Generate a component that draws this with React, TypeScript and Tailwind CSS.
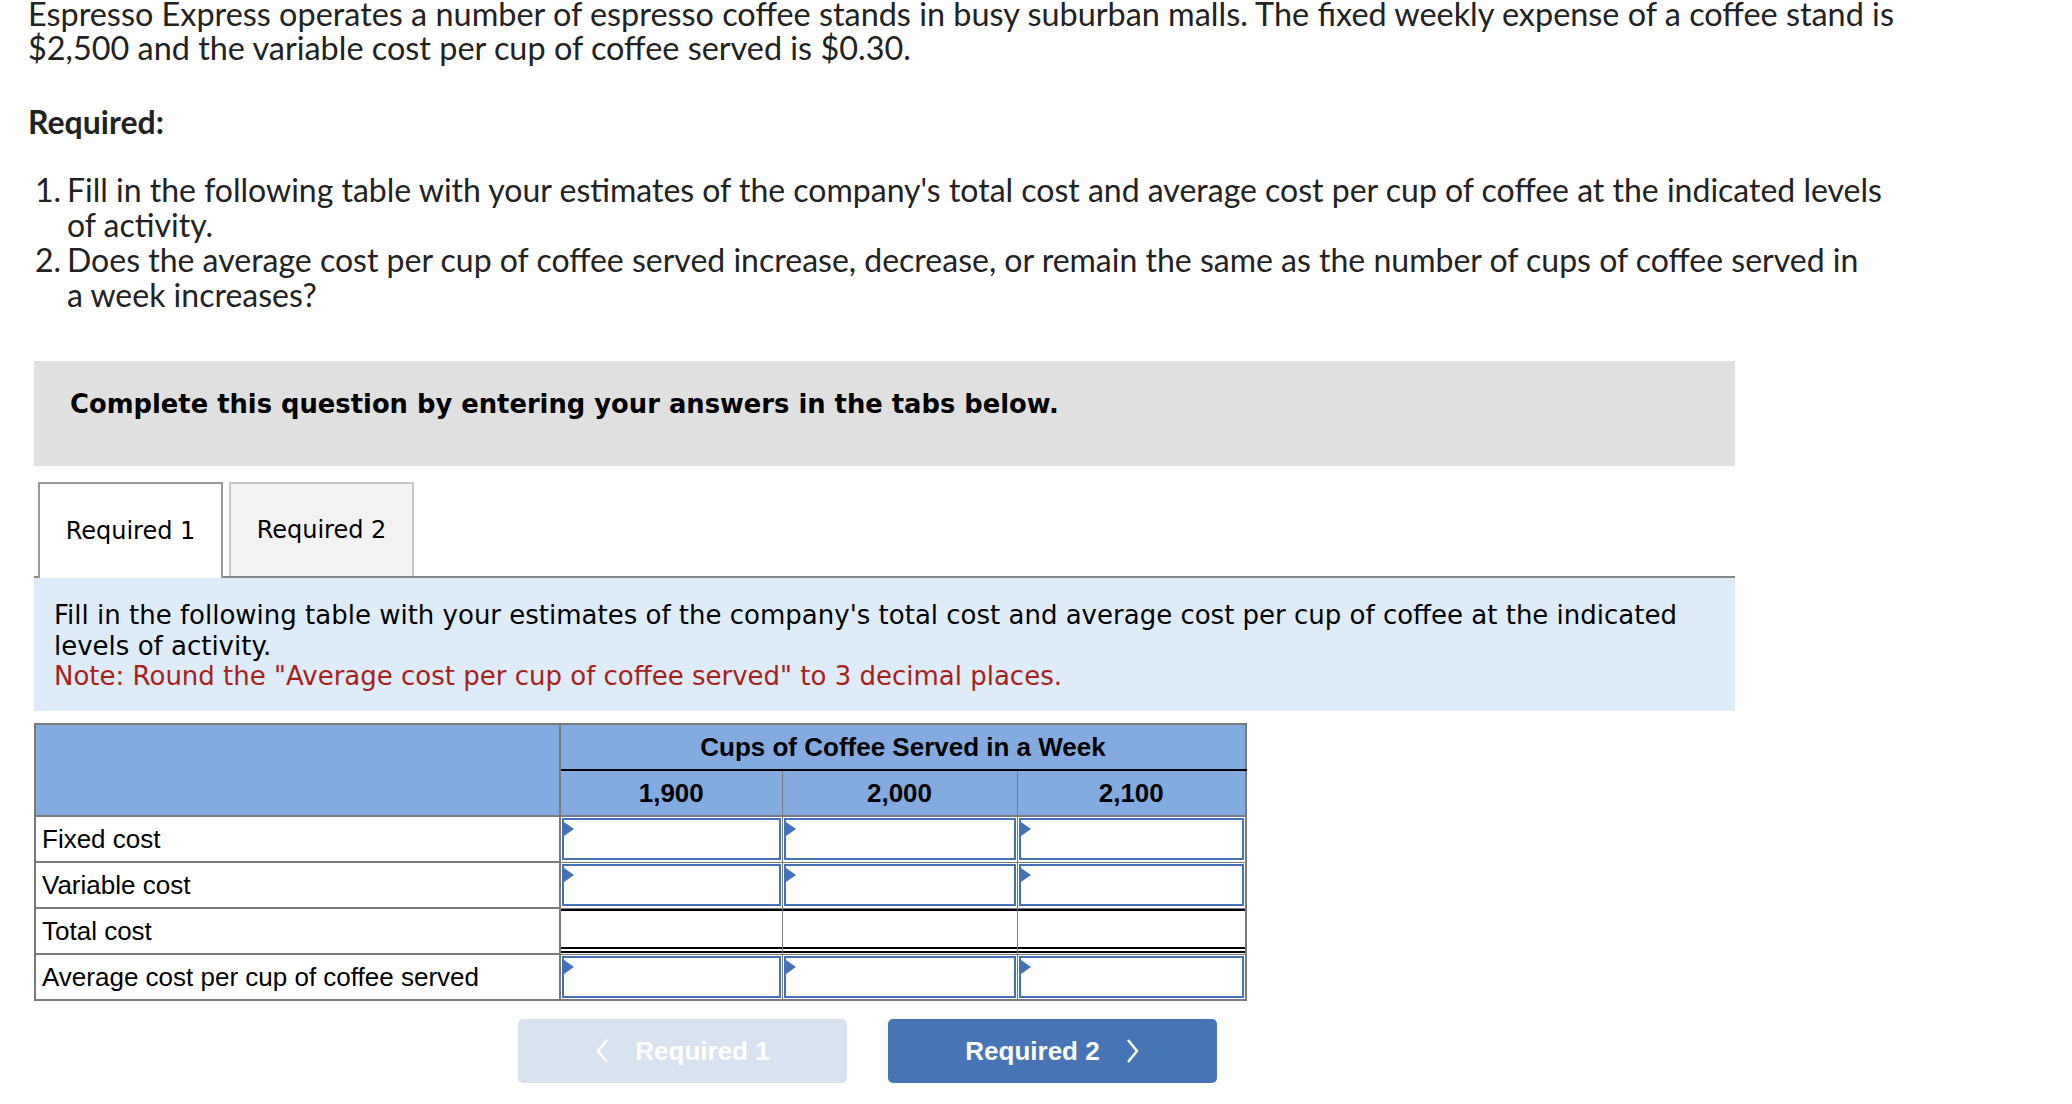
import React from "react";

const intro = "font-['Lato','Liberation_Sans',sans-serif] text-[#222222]";
const verdana = "font-['DejaVu_Sans','Verdana',sans-serif]";
const arial = "font-['Liberation_Sans','Arial',sans-serif]";

const cols = ["1,900", "2,000", "2,100"];

const InputCell: React.FC = () => (
  <td className="border border-[#7b7b7b] p-[1px] bg-white">
    <div className="relative h-[42px] border-2 border-[#4472b8] bg-white">
      <span className="absolute left-0 top-[2px] w-0 h-0 border-y-[7px] border-y-transparent border-l-[10px] border-l-[#4472b8]" />
    </div>
  </td>
);

const TotalCell: React.FC = () => (
  <td className="border border-[#7b7b7b] p-0 bg-white">
    <div className="h-[44px] border-t-2 border-t-black border-b-[6px] border-b-black border-double" />
  </td>
);

const rows = [
  { label: "Fixed cost", total: false },
  { label: "Variable cost", total: false },
  { label: "Total cost", total: true },
  { label: "Average cost per cup of coffee served", total: false },
];

const App: React.FC = () => {
  return (
    <div className="min-h-screen bg-white px-[28px] pb-10">
      {/* problem statement */}
      <p className={`${intro} text-[32.4px] leading-[34px] -mt-[3px] whitespace-nowrap`}>
        Espresso Express operates a number of espresso coffee stands in busy suburban malls. The fixed weekly expense of a coffee stand is
        <br />
        $2,500 and the variable cost per cup of coffee served is $0.30.
      </p>

      <p className={`${intro} text-[32px] leading-[34px] font-bold mt-[40px]`}>Required:</p>

      <div className={`${intro} text-[32px] leading-[35px] mt-[33px] whitespace-nowrap`}>
        <div className="flex">
          <span className="w-[33px] text-right shrink-0">1.</span>
          <span className="pl-[6px]">
            Fill in the following table with your estimates of the company's total cost and average cost per cup of coffee at the indicated levels
            <br />
            of activity.
          </span>
        </div>
        <div className="flex">
          <span className="w-[33px] text-right shrink-0">2.</span>
          <span className="pl-[6px]">
            Does the average cost per cup of coffee served increase, decrease, or remain the same as the number of cups of coffee served in
            <br />
            a week increases?
          </span>
        </div>
      </div>

      <div className="ml-[6px] w-[1701px]">
        {/* instructions banner */}
        <div className="mt-[49px] h-[105px] bg-[#e0e0e0] px-[36px] pt-[28px]">
          <p className={`${verdana} font-bold text-[25.8px] leading-[30px] text-black`}>
            Complete this question by entering your answers in the tabs below.
          </p>
        </div>

        {/* tabs */}
        <div className="mt-[16px] flex items-end border-b-2 border-[#8a8a8a] pl-[4px] gap-[6px]">
          <div className={`${verdana} relative -mb-[2px] flex h-[96px] w-[185px] items-center justify-center border-2 border-b-0 border-[#999999] bg-white text-[24px] text-black`}>
            Required 1
          </div>
          <div className={`${verdana} flex h-[94px] w-[185px] items-center justify-center border-2 border-b-0 border-[#c8c8c8] bg-[#f2f2f2] text-[24px] text-black`}>
            Required 2
          </div>
        </div>

        <div className={`${verdana} h-[133px] bg-[#deebf8] px-[20px] pt-[22px] text-[26px] leading-[30.5px] text-black`}>
          <p className="whitespace-nowrap">
            Fill in the following table with your estimates of the company's total cost and average cost per cup of coffee at the indicated
            <br />
            levels of activity.
          </p>
          <p className="text-[#a8201a] whitespace-nowrap">Note: Round the "Average cost per cup of coffee served" to 3 decimal places.</p>
        </div>

        {/* cost table */}
        <table className={`${arial} mt-[12px] border-collapse border-2 border-[#7b7b7b] text-[26px] text-black`}>
          <thead>
            <tr className="h-[46px]">
              <th rowSpan={2} className="w-[525px] border-2 border-[#7b7b7b] bg-[#83abe0]" />
              <th colSpan={3} className="border-2 border-[#7b7b7b] border-b-black bg-[#83abe0] font-bold">
                Cups of Coffee Served in a Week
              </th>
            </tr>
            <tr className="h-[46px]">
              {cols.map((c, i) => (
                <th
                  key={c}
                  className={`border border-[#7b7b7b] border-t-2 border-t-black border-b-2 border-b-[#7b7b7b] bg-[#83abe0] font-bold ${
                    i === 0 ? "w-[222px]" : i === 1 ? "w-[235px]" : "w-[229px]"
                  }`}
                >
                  {c}
                </th>
              ))}
            </tr>
          </thead>
          <tbody>
            {rows.map((r) => (
              <tr key={r.label} className="h-[46px]">
                <td className="border-2 border-[#7b7b7b] px-[6px] text-left font-normal leading-none">{r.label}</td>
                {cols.map((c) => (r.total ? <TotalCell key={c} /> : <InputCell key={c} />))}
              </tr>
            ))}
          </tbody>
        </table>

        {/* navigation */}
        <div className={`${arial} mt-[18px] ml-[484px] flex gap-[41px] font-bold text-[26px] text-white`}>
          <button className="flex h-[64px] w-[329px] items-center justify-center gap-[26px] rounded-[5px] bg-[#d9e3f0]">
            <svg width="14" height="26" viewBox="0 0 14 26" fill="none" stroke="white" strokeWidth="2.5">
              <polyline points="12,2 3,13 12,24" />
            </svg>
            <span>Required 1</span>
          </button>
          <button className="flex h-[64px] w-[329px] items-center justify-center gap-[26px] rounded-[5px] bg-[#4674b4]">
            <span>Required 2</span>
            <svg width="14" height="26" viewBox="0 0 14 26" fill="none" stroke="white" strokeWidth="2.5">
              <polyline points="2,2 11,13 2,24" />
            </svg>
          </button>
        </div>
      </div>
    </div>
  );
};

export default App;
